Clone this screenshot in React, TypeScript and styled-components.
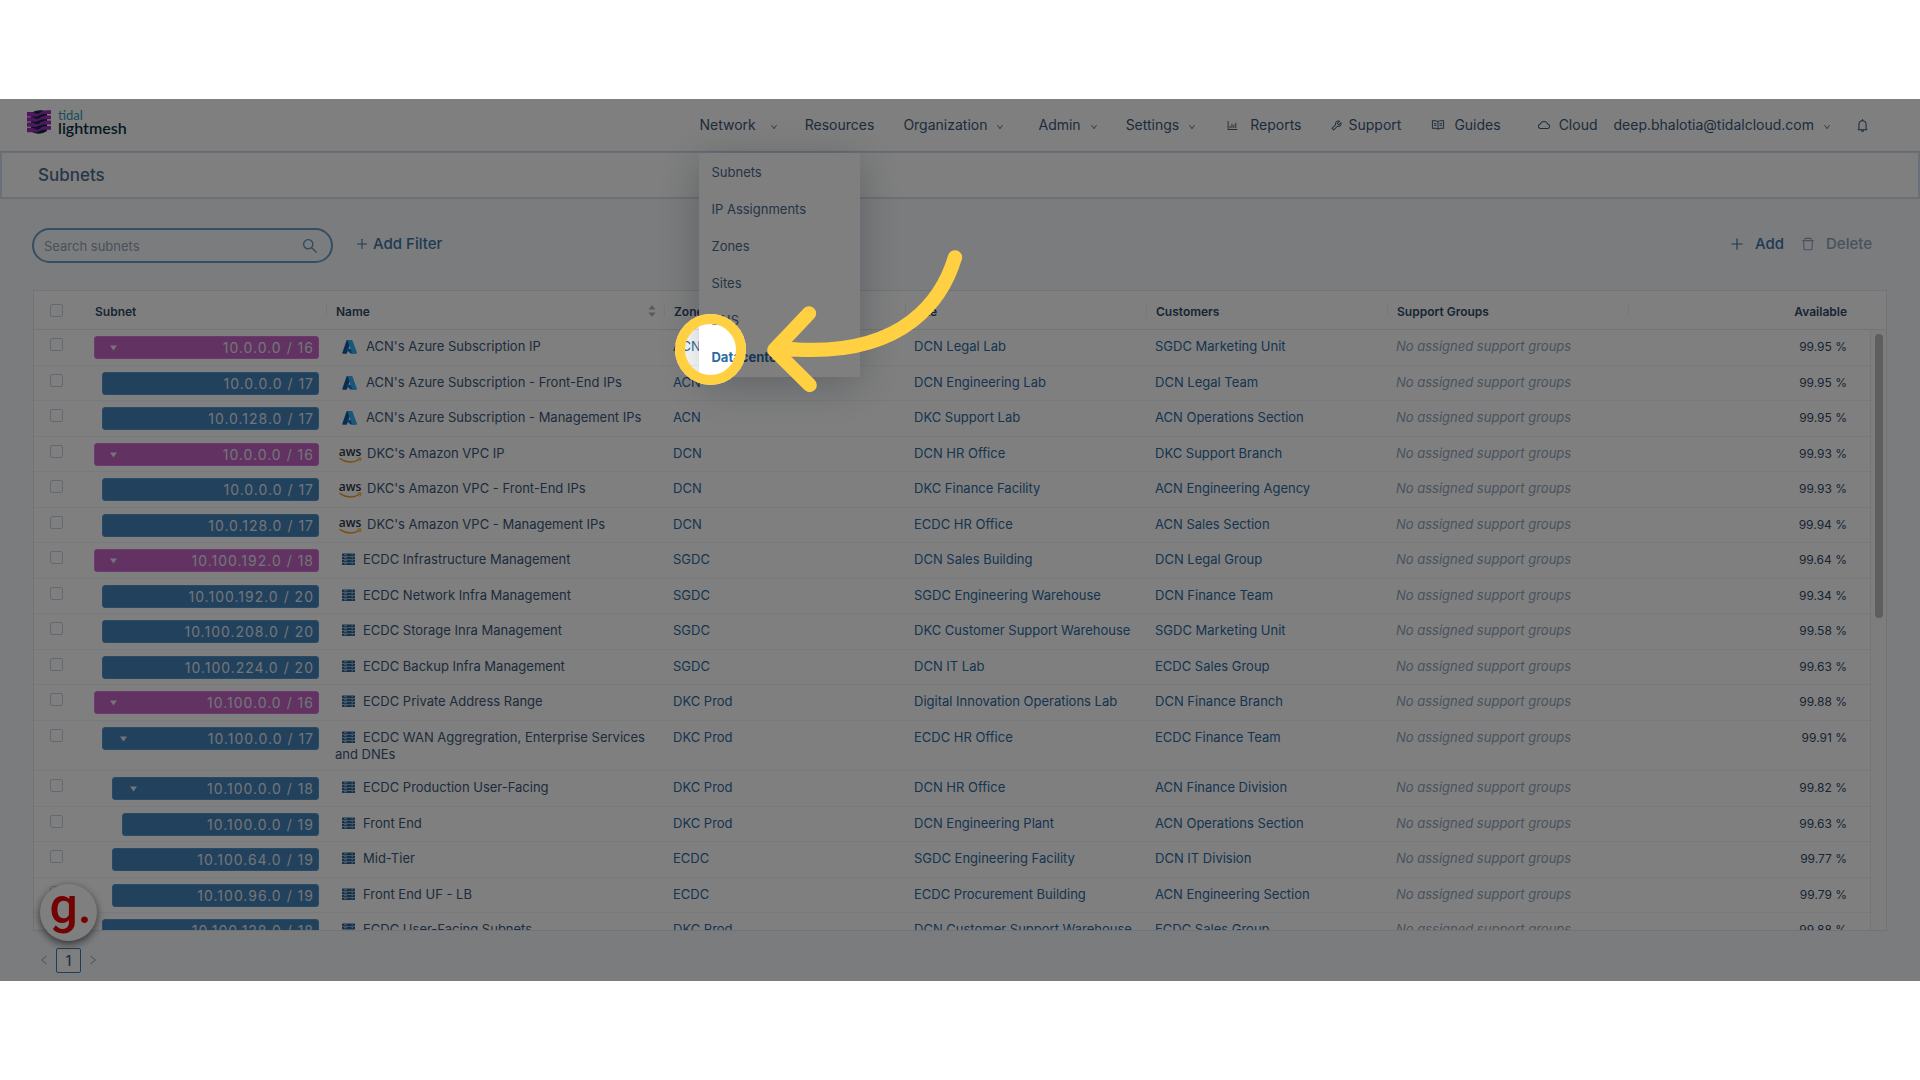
import React from "react";
import styled, { createGlobalStyle } from "styled-components";
import {
  AiOutlineBarChart,
  AiOutlineBell,
  AiOutlineCloud,
  AiOutlineDelete,
  AiOutlineDown,
  AiOutlineLeft,
  AiOutlinePlus,
  AiOutlineRead,
  AiOutlineRight,
  AiOutlineSearch,
  AiOutlineTool,
} from "react-icons/ai";

const color = {
  ink: "#3b5878",
  heading: "#2f4a68",
  link: "#2c6aa0",
  muted: "#90a6bc",
  line: "#e0e7ef",
  faint: "#f1f3f6",
  page: "#f7f9fc",
  yellow: "#ffd042",
};

const GlobalStyle = createGlobalStyle`
  *, *::before, *::after { box-sizing: border-box; }
  body {
    margin: 0;
    background: #fff;
    color: ${color.ink};
    font-family: Inter, "Liberation Sans", sans-serif;
    font-size: 13px;
  }
  button, input { font: inherit; color: inherit; }
  a { color: inherit; text-decoration: none; }
`;

const Stage = styled.div`
  display: flex;
  flex-direction: column;
  height: 100vh;
  padding: 99px 0;
`;

const Frame = styled.div`
  position: relative;
  display: flex;
  flex: 1;
  flex-direction: column;
  min-height: 0;
  overflow: hidden;
  background: ${color.page};
`;

const Header = styled.header`
  display: flex;
  align-items: center;
  justify-content: space-between;
  height: 53px;
  padding: 0 50px 0 27px;
  background: #fff;
  border-bottom: 1px solid #ccd6e2;
`;

const Brand = styled.a`
  display: flex;
  gap: 7px;
  align-items: center;
  padding-bottom: 6px;
`;

const BrandName = styled.span`
  display: flex;
  flex-direction: column;
  font-family: Lato, sans-serif;
`;

const BrandTop = styled.span`
  font-size: 13px;
  line-height: 11px;
  color: #2f9ab8;
`;

const BrandMain = styled.span`
  font-size: 16px;
  line-height: 14px;
  font-weight: 600;
  color: #0b3344;
`;

const Nav = styled.nav`
  display: flex;
  align-items: center;
  font-size: 14px;
`;

const NavSlot = styled.div<{ $lead: number }>`
  position: relative;
  margin-left: ${(p) => p.$lead}px;
`;

const NavItem = styled.a<{ $gap: number }>`
  display: flex;
  gap: ${(p) => p.$gap}px;
  align-items: center;
  line-height: 20px;
  white-space: nowrap;
`;

const Caret = styled(AiOutlineDown)`
  width: 8px;
  height: 8px;
  margin-top: 3px;
`;

const BellButton = styled.button`
  display: flex;
  margin-left: 24px;
  padding: 0;
  background: none;
  border: 0;
`;

const Menu = styled.ul`
  position: absolute;
  z-index: 2;
  top: 38px;
  left: 0;
  width: 161px;
  margin: 0;
  padding: 1px 0;
  list-style: none;
  font-size: 13px;
  background: #fff;
  box-shadow: 0 8px 40px rgba(30, 45, 70, 0.28);
`;

const MenuLink = styled.a<{ $active?: boolean }>`
  display: block;
  padding: 0 12px;
  line-height: 37px;
  color: ${(p) => (p.$active ? color.link : "#4b6a8c")};
  font-weight: ${(p) => (p.$active ? 700 : 400)};
`;

const TitleBar = styled.div`
  display: flex;
  align-items: center;
  height: 47px;
  padding: 0 36px;
  background: #fdfffd;
  border: 2px solid #d3e0ee;
  border-top-width: 1px;
`;

const Title = styled.h1`
  margin: 0;
  font-size: 17px;
  font-weight: 500;
  line-height: 24px;
  color: #4f6f91;
`;

const Toolbar = styled.div`
  display: flex;
  align-items: center;
  padding: 29px 48px 27px 32px;
`;

const SearchBox = styled.label`
  display: flex;
  align-items: center;
  width: 301px;
  height: 35px;
  padding: 0 12px 0 10px;
  border: 2px solid #6c9cc4;
  border-radius: 18px;
  color: #6a94bb;
`;

const SearchInput = styled.input`
  flex: 1;
  min-width: 0;
  padding: 0;
  background: none;
  border: 0;
  outline: 0;
  &::placeholder { color: #93a2b3; opacity: 1; }
`;

const ToolButton = styled.button<{ $gap: number; $lead?: number; $tone?: string }>`
  display: flex;
  gap: ${(p) => p.$gap}px;
  align-items: center;
  margin-left: ${(p) => p.$lead ?? 0}px;
  padding: 0 0 4px;
  background: none;
  border: 0;
  color: ${(p) => p.$tone ?? "#3b74a6"};
  font-size: 15px;
  font-weight: 500;
`;

const Spacer = styled.span`
  flex: 1;
`;

const Panel = styled.section`
  display: flex;
  flex: 1;
  min-height: 0;
  margin: 0 33px;
  overflow: hidden;
  background: #fff;
  border: 1px solid ${color.line};
`;

const TableClip = styled.div`
  flex: 1;
  min-width: 0;
  overflow: hidden;
`;

const Table = styled.table`
  width: 100%;
  table-layout: fixed;
  border-collapse: separate;
  border-spacing: 0;
`;

const Col = styled.col<{ $w?: number }>`
  width: ${(p) => (p.$w ? `${p.$w}px` : "auto")};
`;

const HeadCell = styled.th<{ $rule?: boolean; $end?: boolean }>`
  height: 39px;
  padding: 2px ${(p) => (p.$end ? 23 : 9)}px 0 9px;
  border-bottom: 1px solid ${color.line};
  background: ${(p) =>
    p.$rule ? "linear-gradient(#eef1f5, #eef1f5) right center / 1px 13px no-repeat" : "none"};
  color: ${color.heading};
  font-size: 12px;
  font-weight: 600;
  text-align: ${(p) => (p.$end ? "right" : "left")};
`;

const HeadInner = styled.span`
  display: flex;
  align-items: center;
  justify-content: space-between;
`;

const Row = styled.tr`
  height: 36px;
  &:nth-child(2n) { height: 35px; }
`;

const Cell = styled.td<{ $end?: boolean }>`
  padding: 8px ${(p) => (p.$end ? 23 : 8)}px 7px 8px;
  border-bottom: 1px solid ${color.faint};
  line-height: 17px;
  vertical-align: top;
  text-align: ${(p) => (p.$end ? "right" : "left")};
`;

const PickCell = styled(Cell)`
  padding: 8px 0 0 16px;
`;

const BadgeCell = styled(Cell)`
  padding: 6px 8px 0;
`;

const PickHead = styled(HeadCell)`
  padding: 0 0 0 16px;
`;

const Tick = styled.input`
  display: block;
  width: 13px;
  height: 13px;
  margin: 0;
  appearance: none;
  background: #fff;
  border: 1px solid #c6d2e0;
  border-radius: 2px;
`;

const indents = [0, 8, 18, 28];

const Badge = styled.button<{ $level: number; $root: boolean }>`
  display: flex;
  align-items: center;
  justify-content: space-between;
  width: calc(100% - ${(p) => indents[p.$level]}px);
  height: 23px;
  margin-left: ${(p) => indents[p.$level]}px;
  padding: 0 4px 0 ${(p) => (p.$root ? 15 : 17)}px;
  background: ${(p) => (p.$root ? "#c464c4" : "#4382b8")};
  border: 1px solid ${(p) => (p.$root ? "#d672d6" : "#4f95cf")};
  border-radius: 3px;
  color: #e4eaf2;
  font-size: 14px;
  line-height: 17px;
  letter-spacing: 1px;
`;

const Muted = styled.em`
  color: ${color.muted};
`;

const CellLink = styled.a`
  color: ${color.link};
`;

const Percent = styled.span`
  font-size: 12px;
  color: ${color.heading};
`;

const Glyph = styled.svg<{ $before: number; $after: number; $shift?: number }>`
  margin: -4px ${(p) => p.$after}px -4px ${(p) => p.$before}px;
  vertical-align: ${(p) => p.$shift ?? 1}px;
`;

const Rail = styled.div`
  display: flex;
  flex-direction: column;
  width: 16px;
`;

const RailHead = styled.div`
  height: 39px;
  border-bottom: 1px solid ${color.line};
`;

const RailTrack = styled.div`
  flex: 1;
  padding: 4px;
  background: #fbfbfb;
  border-left: 1px solid #ececec;
`;

const RailThumb = styled.div`
  width: 8px;
  height: 48%;
  border-radius: 4px;
  background: #bcbcbc;
`;

const Pager = styled.footer`
  display: flex;
  gap: 6px;
  align-items: center;
  height: 50px;
  padding: 8px 38px 0;
`;

const PagerArrow = styled.button`
  display: flex;
  padding: 0;
  background: none;
  border: 0;
  color: #a3abb5;
  font-size: 12px;
`;

const PagerPage = styled.button`
  width: 25px;
  height: 25px;
  padding: 0;
  background: #fff;
  border: 1px solid #3f7db3;
  border-radius: 2px;
  color: ${color.link};
  font-size: 14px;
  font-weight: 500;
`;

const Launcher = styled.button`
  position: absolute;
  z-index: 3;
  bottom: 40px;
  left: 40px;
  width: 57px;
  height: 57px;
  padding: 0 0 12px 4px;
  background: #fff;
  border: 0;
  border-radius: 50%;
  box-shadow: 0 3px 8px rgba(0, 0, 0, 0.6);
  color: #e60505;
  font-family: Roboto, sans-serif;
  font-size: 50px;
  font-weight: 500;
  line-height: 45px;
`;

const Spotlight = styled.div`
  position: absolute;
  z-index: 4;
  top: 215px;
  left: 675px;
  width: 71px;
  height: 71px;
  border-radius: 50%;
  box-shadow: 0 0 0 4000px rgba(0, 0, 0, 0.5);
  pointer-events: none;
  &::after {
    content: "";
    position: absolute;
    inset: 0;
    border: 10px solid ${color.yellow};
    border-radius: 50%;
  }
`;

const Pointer = styled.svg`
  position: absolute;
  z-index: 5;
  top: 141px;
  left: 660px;
  pointer-events: none;
`;

function BrandMark() {
  const bands = [0.8, 6, 11.2, 16.6];
  return (
    <svg width="24" height="24" viewBox="0 0 24 24" aria-hidden="true">
      <path d="M4 3C8 0 16-1 20 2V21C16 24 8 25 4 21Z" fill="#0f2b45" />
      {bands.map((y) => (
        <path
          key={y}
          d={`M0 ${y + 1.2}H4C8 ${y + 1.2} 9 ${y + 4} 12 ${y + 2.6}C15 ${y} 17 ${y - 0.6} 20 ${y - 0.6}H24V${y + 3.2}H20C16 ${y + 3.2} 15 ${y + 3} 12 ${y + 4.6}C9 ${y + 6.4} 7 ${y + 5.6} 4 ${y + 5.6}H0Z`}
          fill="#a02fb8"
        />
      ))}
    </svg>
  );
}

function AzureIcon() {
  return (
    <Glyph $before={7} $after={9} width="15" height="15" viewBox="0 0 96 96" aria-hidden="true">
      <path d="M33 6h29L32 90a5 5 0 0 1-4 4H6a5 5 0 0 1-4-6L29 9a5 5 0 0 1 4-3Z" fill="#125ba4" />
      <path d="M71 62H27a2 2 0 0 0-1 4l28 26a4 4 0 0 0 3 1h25Z" fill="#0a78d0" />
      <path d="M67 9a5 5 0 0 0-4-3H31a5 5 0 0 1 5 3l28 79a5 5 0 0 1-5 6h33a5 5 0 0 0 4-6Z" fill="#35aef0" />
    </Glyph>
  );
}

function AwsIcon() {
  return (
    <Glyph $before={4} $after={5} $shift={-3} width="23" height="19" viewBox="0 0 23 19" aria-hidden="true">
      <text x="11" y="10" textAnchor="middle" fontFamily="Open Sans, sans-serif" fontSize="12" fontWeight="600" fill="#2c3848">
        aws
      </text>
      <path d="M1 12.500C7 17 15 17 20 13.500" fill="none" stroke="#f79a1c" strokeWidth="1.500" strokeLinecap="round" />
      <path d="M18.500 12.300C20 11.700 22 11.600 22 12.200C22.200 13 21.500 14.500 20.800 15.300" fill="none" stroke="#f79a1c" strokeWidth="1" />
    </Glyph>
  );
}

function ServerIcon() {
  return (
    <Glyph $before={7} $after={8} $shift={2} width="13" height="13" viewBox="0 0 13 13" aria-hidden="true">
      {[0, 3, 6, 9].map((y) => (
        <g key={y}>
          <rect x="0" y={y + 0.4} width="13" height="2.600" rx="0.600" fill="#2d6596" />
          <rect x="2" y={y + 1.3} width="3" height="0.900" fill="#b6cbdf" />
          <rect x="9.500" y={y + 1.3} width="1.500" height="0.900" fill="#b6cbdf" />
        </g>
      ))}
    </Glyph>
  );
}

function SortIcon() {
  return (
    <svg width="8" height="14" viewBox="0 0 8 14" aria-hidden="true">
      <path d="M4 1L7.500 5.500H0.500ZM4 13L7.500 8.500H0.500Z" fill="#a9b4c0" />
    </svg>
  );
}

function ExpandMark() {
  return (
    <svg width="7" height="6" viewBox="0 0 7 6" aria-hidden="true">
      <path d="M0 0.500H7L3.500 5.500Z" fill="#e4eaf2" />
    </svg>
  );
}

type Kind = "azure" | "aws" | "server";
type Subnet = [string, number, boolean, Kind, string, string, string, string, string];

const subnets: Subnet[] = [
  ["10.0.0.0 / 16", 0, true, "azure", "ACN's Azure Subscription IP", "ACN", "DCN Legal Lab", "SGDC Marketing Unit", "99.95"],
  ["10.0.0.0 / 17", 1, false, "azure", "ACN's Azure Subscription - Front-End IPs", "ACN", "DCN Engineering Lab", "DCN Legal Team", "99.95"],
  ["10.0.128.0 / 17", 1, false, "azure", "ACN's Azure Subscription - Management IPs", "ACN", "DKC Support Lab", "ACN Operations Section", "99.95"],
  ["10.0.0.0 / 16", 0, true, "aws", "DKC's Amazon VPC IP", "DCN", "DCN HR Office", "DKC Support Branch", "99.93"],
  ["10.0.0.0 / 17", 1, false, "aws", "DKC's Amazon VPC - Front-End IPs", "DCN", "DKC Finance Facility", "ACN Engineering Agency", "99.93"],
  ["10.0.128.0 / 17", 1, false, "aws", "DKC's Amazon VPC - Management IPs", "DCN", "ECDC HR Office", "ACN Sales Section", "99.94"],
  ["10.100.192.0 / 18", 0, true, "server", "ECDC Infrastructure Management", "SGDC", "DCN Sales Building", "DCN Legal Group", "99.64"],
  ["10.100.192.0 / 20", 1, false, "server", "ECDC Network Infra Management", "SGDC", "SGDC Engineering Warehouse", "DCN Finance Team", "99.34"],
  ["10.100.208.0 / 20", 1, false, "server", "ECDC Storage Inra Management", "SGDC", "DKC Customer Support Warehouse", "SGDC Marketing Unit", "99.58"],
  ["10.100.224.0 / 20", 1, false, "server", "ECDC Backup Infra Management", "SGDC", "DCN IT Lab", "ECDC Sales Group", "99.63"],
  ["10.100.0.0 / 16", 0, true, "server", "ECDC Private Address Range", "DKC Prod", "Digital Innovation Operations Lab", "DCN Finance Branch", "99.88"],
  ["10.100.0.0 / 17", 1, true, "server", "ECDC WAN Aggregration, Enterprise Services and DNEs", "DKC Prod", "ECDC HR Office", "ECDC Finance Team", "99.91"],
  ["10.100.0.0 / 18", 2, true, "server", "ECDC Production User-Facing", "DKC Prod", "DCN HR Office", "ACN Finance Division", "99.82"],
  ["10.100.0.0 / 19", 3, false, "server", "Front End", "DKC Prod", "DCN Engineering Plant", "ACN Operations Section", "99.63"],
  ["10.100.64.0 / 19", 2, false, "server", "Mid-Tier", "ECDC", "SGDC Engineering Facility", "DCN IT Division", "99.77"],
  ["10.100.96.0 / 19", 2, false, "server", "Front End UF - LB", "ECDC", "ECDC Procurement Building", "ACN Engineering Section", "99.79"],
  ["10.100.128.0 / 18", 1, false, "server", "ECDC User-Facing Subnets", "DKC Prod", "DCN Customer Support Warehouse", "ECDC Sales Group", "99.88"],
];

const kindIcon: Record<Kind, React.ReactElement> = {
  azure: <AzureIcon />,
  aws: <AwsIcon />,
  server: <ServerIcon />,
};

const menuItems = ["Subnets", "IP Assignments", "Zones", "Sites", "DNS", "Datacenters"];

function TopNav() {
  return (
    <Nav aria-label="Main">
      <NavSlot $lead={0}>
        <NavItem href="#network" $gap={14}>Network<Caret /></NavItem>
        <Menu>
          {menuItems.map((item) => (
            <li key={item}>
              <MenuLink href={`#${item}`} $active={item === "Datacenters"}>{item}</MenuLink>
            </li>
          ))}
        </Menu>
      </NavSlot>
      <NavSlot $lead={27}><NavItem href="#resources" $gap={0}>Resources</NavItem></NavSlot>
      <NavSlot $lead={29}><NavItem href="#organization" $gap={9}>Organization<Caret /></NavItem></NavSlot>
      <NavSlot $lead={34}><NavItem href="#admin" $gap={9}>Admin<Caret /></NavItem></NavSlot>
      <NavSlot $lead={28}><NavItem href="#settings" $gap={9}>Settings<Caret /></NavItem></NavSlot>
      <NavSlot $lead={30}><NavItem href="#reports" $gap={11}><AiOutlineBarChart size={13} />Reports</NavItem></NavSlot>
      <NavSlot $lead={28}><NavItem href="#support" $gap={6}><AiOutlineTool size={13} />Support</NavItem></NavSlot>
      <NavSlot $lead={30}><NavItem href="#guides" $gap={9}><AiOutlineRead size={14} />Guides</NavItem></NavSlot>
      <NavSlot $lead={36}><NavItem href="#cloud" $gap={8}><AiOutlineCloud size={14} />Cloud</NavItem></NavSlot>
      <NavSlot $lead={16}><NavItem href="#account" $gap={9}>deep.bhalotia@tidalcloud.com<Caret /></NavItem></NavSlot>
      <BellButton type="button" aria-label="Notifications"><AiOutlineBell size={15} /></BellButton>
    </Nav>
  );
}

function SubnetTable() {
  return (
    <Panel>
      <TableClip>
        <Table>
          <colgroup>
            <Col $w={52} />
            <Col $w={241} />
            <Col />
            <Col $w={241} />
            <Col $w={241} />
            <Col $w={241} />
            <Col $w={241} />
            <Col $w={241} />
          </colgroup>
          <thead>
            <tr>
              <PickHead><Tick type="checkbox" aria-label="Select all subnets" /></PickHead>
              <HeadCell $rule>Subnet</HeadCell>
              <HeadCell $rule><HeadInner>Name<SortIcon /></HeadInner></HeadCell>
              <HeadCell $rule>Zone</HeadCell>
              <HeadCell $rule>Site</HeadCell>
              <HeadCell $rule>Customers</HeadCell>
              <HeadCell $rule>Support Groups</HeadCell>
              <HeadCell $end>Available</HeadCell>
            </tr>
          </thead>
          <tbody>
            {subnets.map(([cidr, level, parent, kind, name, zone, site, customer, free]) => (
              <Row key={name}>
                <PickCell><Tick type="checkbox" aria-label={`Select ${name}`} /></PickCell>
                <BadgeCell>
                  <Badge type="button" $level={level} $root={level === 0}>
                    {parent ? <ExpandMark /> : <span />}
                    {cidr}
                  </Badge>
                </BadgeCell>
                <Cell>{kindIcon[kind]}{name}</Cell>
                <Cell><CellLink href="#zone">{zone}</CellLink></Cell>
                <Cell><CellLink href="#site">{site}</CellLink></Cell>
                <Cell><CellLink href="#customer">{customer}</CellLink></Cell>
                <Cell><Muted>No assigned support groups</Muted></Cell>
                <Cell $end><Percent>{free} %</Percent></Cell>
              </Row>
            ))}
          </tbody>
        </Table>
      </TableClip>
      <Rail>
        <RailHead />
        <RailTrack><RailThumb /></RailTrack>
      </Rail>
    </Panel>
  );
}

export default function App() {
  return (
    <>
      <GlobalStyle />
      <Stage>
        <Frame>
          <Header>
            <Brand href="#home">
              <BrandMark />
              <BrandName>
                <BrandTop>tidal</BrandTop>
                <BrandMain>lightmesh</BrandMain>
              </BrandName>
            </Brand>
            <TopNav />
          </Header>
          <TitleBar><Title>Subnets</Title></TitleBar>
          <Toolbar>
            <SearchBox>
              <SearchInput type="text" placeholder="Search subnets" aria-label="Search subnets" />
              <AiOutlineSearch size={18} />
            </SearchBox>
            <ToolButton type="button" $gap={4} $lead={22}><AiOutlinePlus size={14} />Add Filter</ToolButton>
            <Spacer />
            <ToolButton type="button" $gap={10}><AiOutlinePlus size={16} />Add</ToolButton>
            <ToolButton type="button" $gap={10} $lead={16} $tone="#8ea5bd"><AiOutlineDelete size={16} />Delete</ToolButton>
          </Toolbar>
          <SubnetTable />
          <Pager>
            <PagerArrow type="button" aria-label="Previous page"><AiOutlineLeft /></PagerArrow>
            <PagerPage type="button">1</PagerPage>
            <PagerArrow type="button" aria-label="Next page"><AiOutlineRight /></PagerArrow>
          </Pager>
          <Launcher type="button">g.</Launcher>
          <Spotlight />
          <Pointer width="320" height="170" viewBox="0 0 960 510" fill="none" stroke={color.yellow} strokeWidth="43" strokeLinecap="round" strokeLinejoin="round" aria-hidden="true">
            <path d="M885 52C850 170 740 350 400 328" />
            <path d="M447 220L343 330L449 435" />
            <path d="M400 328L350 330" />
          </Pointer>
        </Frame>
      </Stage>
    </>
  );
}
